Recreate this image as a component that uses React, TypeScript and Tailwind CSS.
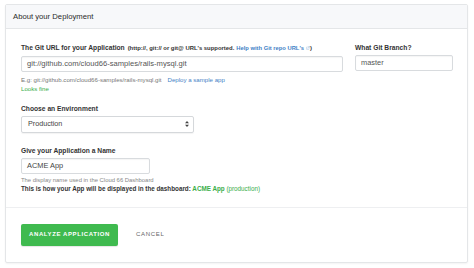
import { ExternalLink } from 'lucide-react'

function Label({ children }: { children: React.ReactNode }) {
  return <div className="text-[6.7px] leading-[9px] font-bold text-[#333]">{children}</div>
}

export default function App() {
  return (
    <div className="w-[474px] h-[268px] bg-white pt-[4px] pl-[5px] font-['Liberation_Sans',Arial,sans-serif]">
      <div className="w-[463px] h-[259px] border border-[#e4e6e8] rounded-[2px] shadow-[0_1px_2px_rgba(0,0,0,0.05)] flex flex-col">
        {/* Header */}
        <div className="h-[24px] bg-[#f7f8fa] border-b border-[#e4e6e8] flex items-center pl-[7px] pt-[1px]">
          <span className="text-[7.7px] text-[#2b2b2b]">About your Deployment</span>
        </div>

        {/* Body */}
        <div className="pt-[14px] pl-[15px] pb-[14px] border-b border-[#eeeff1]">
          <div className="flex gap-[12px]">
            <div className="w-[322px]">
              <div className="flex items-baseline whitespace-nowrap">
                <Label>The Git URL for your Application</Label>
                <span className="ml-[3px] text-[5.9px] font-bold text-[#333]">(http://, git:// or git@ URL's supported.</span>
                <span className="ml-[2px] text-[5.8px] font-bold text-[#3f7fc6]">Help with Git repo URL's</span>
                <ExternalLink size={4} strokeWidth={2.5} className="ml-[2px] text-[#9bb9de] self-center" />
                <span className="text-[5.9px] font-bold text-[#333]">)</span>
              </div>
              <div className="mt-[3px] h-[16px] border border-[#d8dbde] rounded-[2px] flex items-center pl-[5px] text-[7.6px] text-[#555] shadow-[inset_0_1px_1px_rgba(0,0,0,0.04)]">
                git://github.com/cloud66-samples/rails-mysql.git
              </div>
            </div>
            <div className="w-[98px]">
              <Label>What Git Branch?</Label>
              <div className="mt-[3px] h-[16px] border border-[#d8dbde] rounded-[2px] flex items-center pl-[5px] text-[7.4px] text-[#555] shadow-[inset_0_1px_1px_rgba(0,0,0,0.04)]">
                master
              </div>
            </div>
          </div>

          <div className="mt-[4px] leading-[8px] text-[6.1px] text-[#777] whitespace-nowrap">
            E.g: git://github.com/cloud66-samples/rails-mysql.git
            <span className="ml-[6px] text-[#3f7fc6]">Deploy a sample app</span>
          </div>
          <div className="mt-[1px] leading-[8px] text-[6.1px] text-[#3aae4a]">Looks fine</div>

          <div className="mt-[11px]">
            <Label>Choose an Environment</Label>
          </div>
          <div className="mt-[3px] w-[173px] h-[17px] border border-[#d5d8db] rounded-[2px] flex items-center justify-between pl-[6px] pr-[4px] text-[7.2px] text-[#444] shadow-[0_1px_1px_rgba(0,0,0,0.05)]">
            <span>Production</span>
            <svg width="4" height="6" viewBox="0 0 4 6">
              <path d="M2 0 L4 2.3 L0 2.3 Z M2 6 L4 3.7 L0 3.7 Z" fill="#444" />
            </svg>
          </div>

          <div className="mt-[13px]">
            <Label>Give your Application a Name</Label>
          </div>
          <div className="mt-[3px] w-[129px] h-[16px] border border-[#d8dbde] rounded-[2px] flex items-center pl-[5px] text-[7.4px] text-[#444] shadow-[inset_0_1px_1px_rgba(0,0,0,0.04)]">
            ACME App
          </div>
          <div className="mt-[2px] leading-[8px] text-[5.9px] text-[#888]">
            The display name used in the Cloud 66 Dashboard
          </div>
          <div className="mt-[1px] leading-[8px] text-[6.3px] font-bold text-[#333] whitespace-nowrap">
            This is how your App will be displayed in the dashboard:{' '}
            <span className="text-[#3aae4a]">ACME App</span>{' '}
            <span className="text-[#3aae4a] font-normal">(production)</span>
          </div>
        </div>

        {/* Footer */}
        <div className="flex items-center pl-[15px] pt-[16px]">
          <button className="w-[97px] h-[22px] bg-[#3fba4f] rounded-[2px] text-white text-[6px] font-bold tracking-[0.6px] shadow-[0_1px_1px_rgba(0,0,0,0.1)]">
            ANALYZE APPLICATION
          </button>
          <button className="ml-[18px] text-[6px] tracking-[0.7px] text-[#666]">CANCEL</button>
        </div>
      </div>
    </div>
  )
}
